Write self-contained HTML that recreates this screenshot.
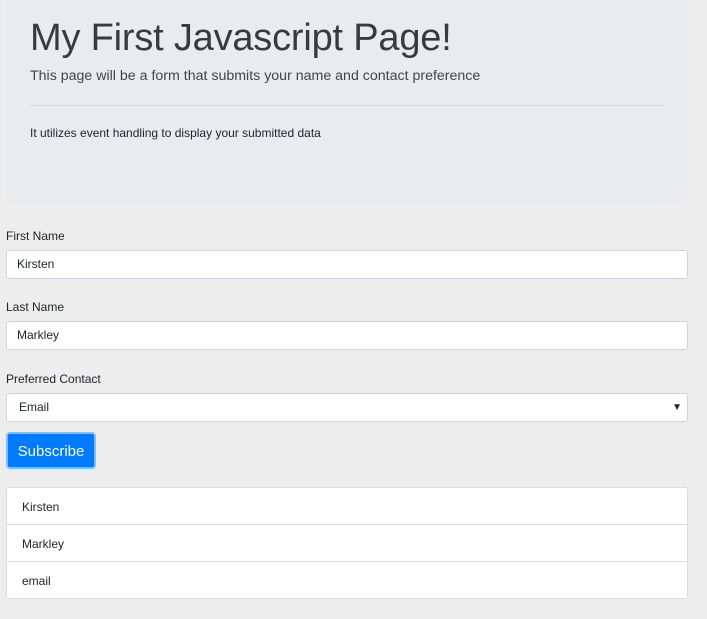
<!DOCTYPE html>
<html><head><style>
body{margin:0;background:#ededed;font-family:"Liberation Sans",sans-serif;color:#212529;width:707px;height:619px;overflow:hidden;position:relative}
.j{position:absolute;left:6px;top:0;width:682px;height:201px;background:#e9ecef;border-radius:0 0 4px 4px}
.t{position:absolute;left:30px;top:17px;font-size:38px;font-weight:300;color:#3a3a3a;letter-spacing:-0.2px;white-space:nowrap}
.s{position:absolute;left:30px;top:68px;font-size:14.2px;color:#444;white-space:nowrap}
.hr{position:absolute;left:30px;top:105px;width:634px;height:1px;background:#d5d8db}
.p{position:absolute;left:30px;top:126px;font-size:12px;white-space:nowrap}
.l{position:absolute;left:6px;font-size:12px}
.i{position:absolute;left:6px;width:680px;height:27px;background:#fff;border:1px solid #ced4da;border-radius:3px;font-size:12px;line-height:27px;box-sizing:content-box}
.i span{margin-left:10px}
.b{position:absolute;left:6px;top:432px;width:86px;height:33px;background:#007bff;border:2px solid #80bdff;border-radius:4px;color:#fff;font-size:15px;line-height:35px;text-align:center}
.ls{position:absolute;left:6px;top:487px;width:680px;height:110px;background:#fff;border:1px solid #dcdcdc;border-radius:3px}
.r{height:36px;border-bottom:1px solid #dcdcdc;font-size:12px;line-height:38px;padding-left:15px}
.r:last-child{border-bottom:none}
</style></head><body>
<div class="j"></div>
<div class="t">My First Javascript Page!</div>
<div class="s">This page will be a form that submits your name and contact preference</div>
<div class="hr"></div>
<div class="p">It utilizes event handling to display your submitted data</div>
<div class="l" style="top:229px">First Name</div>
<div class="i" style="top:250px"><span>Kirsten</span></div>
<div class="l" style="top:300px">Last Name</div>
<div class="i" style="top:321px"><span>Markley</span></div>
<div class="l" style="top:372px">Preferred Contact</div>
<div class="i" style="top:393px"><span style="margin-left:12px">Email</span><span style="position:absolute;right:5px;font-size:10px">▼</span></div>
<div class="b">Subscribe</div>
<div class="ls"><div class="r">Kirsten</div><div class="r">Markley</div><div class="r">email</div></div>
</body></html>
